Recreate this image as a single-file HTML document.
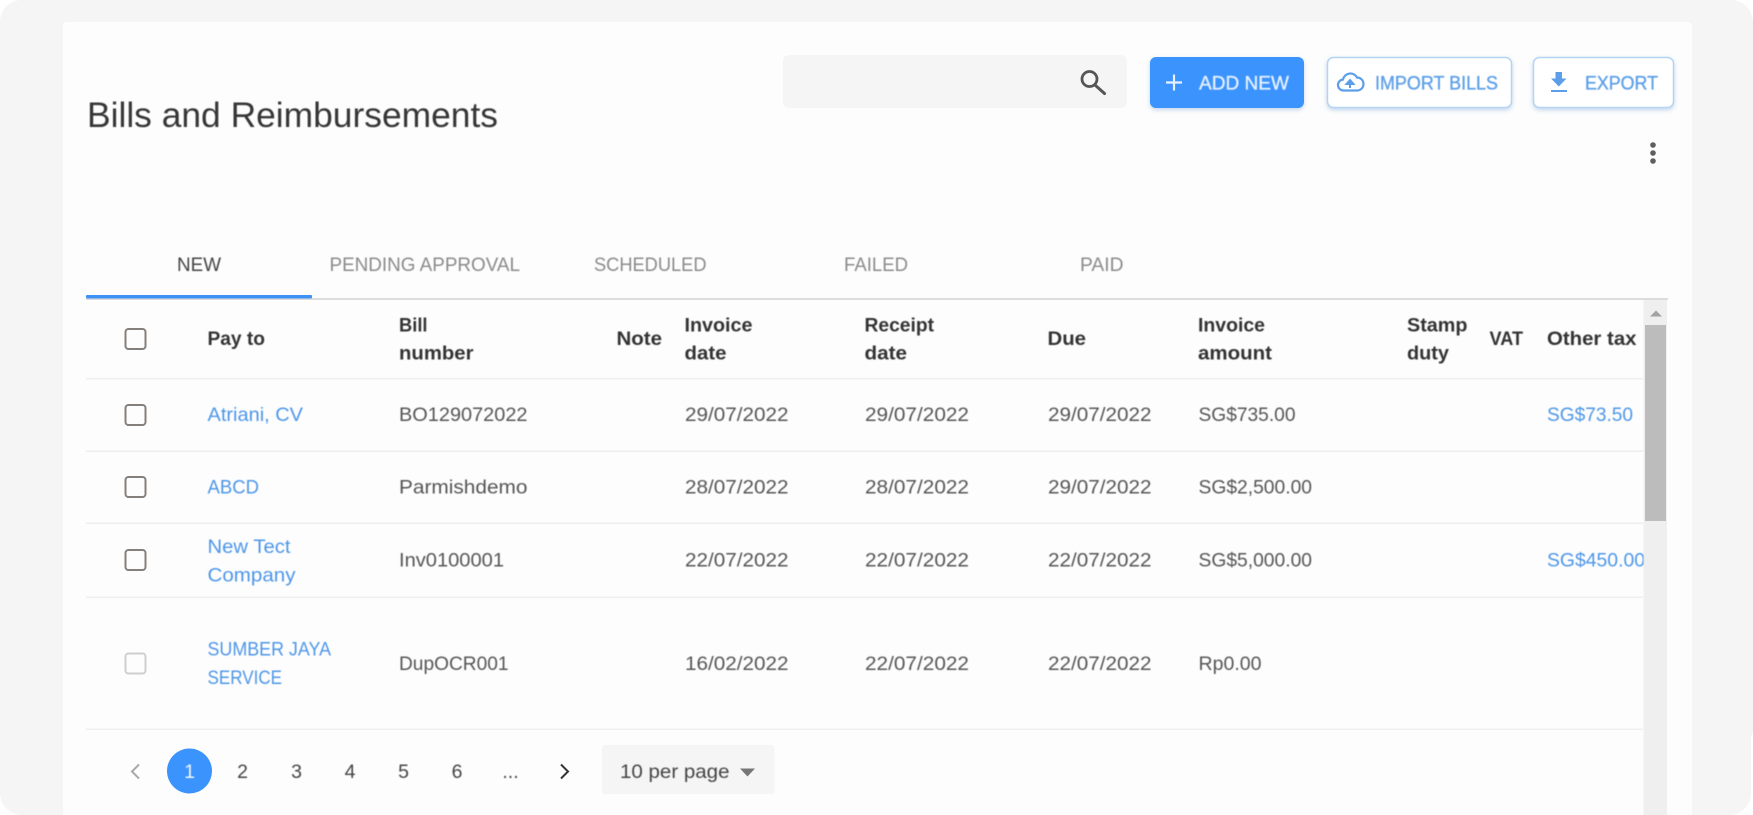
<!DOCTYPE html>
<html lang="en"><head><meta charset="utf-8"><title>Bills and Reimbursements</title>
<style>
html,body{margin:0;padding:0;background:#fff;width:1753px;height:815px;overflow:hidden}
svg{display:block}
text{font-family:"Liberation Sans",sans-serif;font-size:19.5px;fill:#555}
.t{filter:blur(.45px)}
.b{font-weight:700;fill:#333}
.l{fill:#4d96e8}
.tab{fill:#8a8a8a}
.btn{fill:#5c9fe8;stroke:#5c9fe8;stroke-width:.35px}
.pg{fill:#444;text-anchor:middle}
</style></head><body>
<svg width="1753" height="815" viewBox="0 0 1753 815" xmlns="http://www.w3.org/2000/svg">
<defs>
<clipPath id="c"><rect x="1500" y="530" width="143.500" height="60"/></clipPath>
<filter id="s" x="-10%" y="-20%" width="120%" height="150%"><feDropShadow dx="0" dy="2" stdDeviation="2" flood-color="#3d7fc4" flood-opacity=".3"/></filter>
</defs>
<rect width="1753" height="815" fill="#fff"/>
<rect x="0" y="0" width="1751" height="815" rx="22" fill="#f5f5f5"/>
<rect x="0" y="0" width="1753" height="750" rx="22" fill="#f5f5f5"/>
<path d="M63 815V26a4 4 0 0 1 4-4H1688a4 4 0 0 1 4 4V815Z" fill="#fdfdfd"/>

<!-- search -->
<rect x="783" y="55" width="344" height="53" rx="6" fill="#f5f5f5"/>
<circle cx="1089.500" cy="79" r="7.500" fill="none" stroke="#555" stroke-width="2.800"/>
<path d="M1095 85L1104.500 93.500" stroke="#555" stroke-width="3" fill="none" stroke-linecap="round"/>

<!-- buttons -->
<rect x="1150" y="57" width="154" height="51" rx="6" fill="#3b93fd" filter="url(#s)"/>
<path d="M1166 82.500H1182M1174 74.500V90.500" stroke="#e6f1ff" stroke-width="2.200"/>
<rect x="1327.500" y="57.500" width="184" height="50" rx="6" fill="#fff" stroke="#b3d4f3" stroke-width="1.500" filter="url(#s)"/>
<path d="M1344 90.500a5.500 5.500 0 0 1-1-11a7.500 7.500 0 0 1 14-2a6.500 6.500 0 0 1 0 13Z" fill="none" stroke="#5c9fe8" stroke-width="2.200"/>
<path d="M1350 88V83M1346.500 84L1350 80L1353.500 84Z" stroke="#5c9fe8" stroke-width="2" fill="#5c9fe8"/>
<rect x="1533.500" y="57.500" width="140" height="50" rx="6" fill="#fff" stroke="#b3d4f3" stroke-width="1.500" filter="url(#s)"/>
<path d="M1555.500 72H1562V78.500H1566.500L1558.800 86.500L1551 78.500H1555.500Z" fill="#5c9fe8"/>
<rect x="1551" y="90" width="16" height="2" fill="#5c9fe8"/>
<circle cx="1653" cy="145" r="2.800" fill="#5f5f5f"/><circle cx="1653" cy="153" r="2.800" fill="#5f5f5f"/><circle cx="1653" cy="161" r="2.800" fill="#5f5f5f"/>

<!-- tab line -->
<rect x="86" y="298" width="1582" height="2" fill="#dcdcdc"/>
<rect x="86" y="295" width="226" height="3.500" rx="1" fill="#3f92f5"/>

<!-- row lines -->
<g fill="#eeeeee">
<rect x="86" y="378" width="1557" height="1.500"/>
<rect x="86" y="450.500" width="1557" height="1.500"/>
<rect x="86" y="522.500" width="1557" height="1.500"/>
<rect x="86" y="596.500" width="1557" height="1.500"/>
<rect x="86" y="728.500" width="1557" height="1.500"/>
</g>

<!-- scrollbar -->
<rect x="1643.500" y="300" width="23.500" height="515" fill="#efefef"/>
<rect x="1645" y="325" width="21" height="196" fill="#bcbcbc"/>
<path d="M1650 316.500L1656 310.500L1662 316.500Z" fill="#a3a3a3"/>

<!-- checkboxes -->
<g fill="none" stroke="#85807c" stroke-width="2">
<rect x="125.500" y="329" width="20" height="20" rx="3"/>
<rect x="125.500" y="405" width="20" height="20" rx="3"/>
<rect x="125.500" y="477" width="20" height="20" rx="3"/>
<rect x="125.500" y="550" width="20" height="20" rx="3"/>
<rect x="125.500" y="653.500" width="20" height="20" rx="3" stroke="#cfcfcf"/>
</g>

<!-- pagination -->
<circle cx="189.500" cy="771" r="22.500" fill="#3b93fd"/>
<path d="M139 764.500L132 771.500L139 778.500" fill="none" stroke="#aaa" stroke-width="2"/>
<path d="M561 764.500L568 771.500L561 778.500" fill="none" stroke="#333" stroke-width="2"/>
<rect x="602" y="745" width="172.500" height="49" rx="3" fill="#f5f5f5"/>
<path d="M740 768.500H755L747.500 776.500Z" fill="#777"/>

<g class="t">
<text x="87" y="127" style="font-size:35px;fill:#363636" textLength="411" lengthAdjust="spacingAndGlyphs">Bills and Reimbursements</text>

<text x="1199" y="89.500" style="fill:#e6f1ff;stroke:#e6f1ff;stroke-width:.35px" textLength="90" lengthAdjust="spacingAndGlyphs">ADD NEW</text>
<text class="btn" x="1375" y="89.500" textLength="123" lengthAdjust="spacingAndGlyphs">IMPORT BILLS</text>
<text class="btn" x="1585" y="89.500" textLength="73" lengthAdjust="spacingAndGlyphs">EXPORT</text>

<text x="177" y="271" style="fill:#444" textLength="44" lengthAdjust="spacingAndGlyphs">NEW</text>
<text class="tab" x="329.500" y="271" textLength="190.500" lengthAdjust="spacingAndGlyphs">PENDING APPROVAL</text>
<text class="tab" x="594" y="271" textLength="112.500" lengthAdjust="spacingAndGlyphs">SCHEDULED</text>
<text class="tab" x="844" y="271" textLength="64" lengthAdjust="spacingAndGlyphs">FAILED</text>
<text class="tab" x="1080" y="271" textLength="43.500" lengthAdjust="spacingAndGlyphs">PAID</text>

<text class="b" x="207.500" y="345" textLength="57.500" lengthAdjust="spacingAndGlyphs">Pay to</text>
<text class="b" x="399" y="331.500" textLength="28.500" lengthAdjust="spacingAndGlyphs">Bill</text>
<text class="b" x="399" y="359.500" textLength="74.500" lengthAdjust="spacingAndGlyphs">number</text>
<text class="b" x="616.500" y="345" textLength="45.500" lengthAdjust="spacingAndGlyphs">Note</text>
<text class="b" x="684.500" y="331.500" textLength="68" lengthAdjust="spacingAndGlyphs">Invoice</text>
<text class="b" x="684.500" y="359.500" textLength="42" lengthAdjust="spacingAndGlyphs">date</text>
<text class="b" x="864.500" y="331.500" textLength="69.500" lengthAdjust="spacingAndGlyphs">Receipt</text>
<text class="b" x="864.500" y="359.500" textLength="42.500" lengthAdjust="spacingAndGlyphs">date</text>
<text class="b" x="1047.500" y="345" textLength="38.500" lengthAdjust="spacingAndGlyphs">Due</text>
<text class="b" x="1198" y="331.500" textLength="67" lengthAdjust="spacingAndGlyphs">Invoice</text>
<text class="b" x="1198" y="359.500" textLength="74" lengthAdjust="spacingAndGlyphs">amount</text>
<text class="b" x="1407" y="331.500" textLength="60.500" lengthAdjust="spacingAndGlyphs">Stamp</text>
<text class="b" x="1407" y="359.500" textLength="42" lengthAdjust="spacingAndGlyphs">duty</text>
<text class="b" x="1489.500" y="345" textLength="33.500" lengthAdjust="spacingAndGlyphs">VAT</text>
<text class="b" x="1547" y="345" textLength="89.500" lengthAdjust="spacingAndGlyphs">Other tax</text>

<text class="l" x="207.500" y="421" textLength="95.500" lengthAdjust="spacingAndGlyphs">Atriani, CV</text>
<text x="399" y="421" textLength="128.500" lengthAdjust="spacingAndGlyphs">BO129072022</text>
<text x="685" y="421" textLength="103.500" lengthAdjust="spacingAndGlyphs">29/07/2022</text>
<text x="865" y="421" textLength="104" lengthAdjust="spacingAndGlyphs">29/07/2022</text>
<text x="1048" y="421" textLength="103.500" lengthAdjust="spacingAndGlyphs">29/07/2022</text>
<text x="1198.500" y="421" textLength="97" lengthAdjust="spacingAndGlyphs">SG$735.00</text>
<text class="l" x="1547" y="421" textLength="86" lengthAdjust="spacingAndGlyphs">SG$73.50</text>

<text class="l" x="207.500" y="493.500" textLength="51.500" lengthAdjust="spacingAndGlyphs">ABCD</text>
<text x="399" y="493.500" textLength="128.500" lengthAdjust="spacingAndGlyphs">Parmishdemo</text>
<text x="685" y="493.500" textLength="103.500" lengthAdjust="spacingAndGlyphs">28/07/2022</text>
<text x="865" y="493.500" textLength="104" lengthAdjust="spacingAndGlyphs">28/07/2022</text>
<text x="1048" y="493.500" textLength="103.500" lengthAdjust="spacingAndGlyphs">29/07/2022</text>
<text x="1198.500" y="493.500" textLength="113.500" lengthAdjust="spacingAndGlyphs">SG$2,500.00</text>

<text class="l" x="207.500" y="553" textLength="83" lengthAdjust="spacingAndGlyphs">New Tect</text>
<text class="l" x="207.500" y="581.500" textLength="88" lengthAdjust="spacingAndGlyphs">Company</text>
<text x="399" y="566.500" textLength="105" lengthAdjust="spacingAndGlyphs">Inv0100001</text>
<text x="685" y="566.500" textLength="103.500" lengthAdjust="spacingAndGlyphs">22/07/2022</text>
<text x="865" y="566.500" textLength="104" lengthAdjust="spacingAndGlyphs">22/07/2022</text>
<text x="1048" y="566.500" textLength="103.500" lengthAdjust="spacingAndGlyphs">22/07/2022</text>
<text x="1198.500" y="566.500" textLength="113.500" lengthAdjust="spacingAndGlyphs">SG$5,000.00</text>
<g clip-path="url(#c)"><text class="l" x="1547" y="566.500" textLength="98" lengthAdjust="spacingAndGlyphs">SG$450.00</text></g>

<text class="l" x="207.500" y="655.500" textLength="123.500" lengthAdjust="spacingAndGlyphs">SUMBER JAYA</text>
<text class="l" x="207.500" y="684" textLength="74.500" lengthAdjust="spacingAndGlyphs">SERVICE</text>
<text x="399" y="670" textLength="109.500" lengthAdjust="spacingAndGlyphs">DupOCR001</text>
<text x="685" y="670" textLength="103.500" lengthAdjust="spacingAndGlyphs">16/02/2022</text>
<text x="865" y="670" textLength="104" lengthAdjust="spacingAndGlyphs">22/07/2022</text>
<text x="1048" y="670" textLength="103.500" lengthAdjust="spacingAndGlyphs">22/07/2022</text>
<text x="1198.500" y="670" textLength="63" lengthAdjust="spacingAndGlyphs">Rp0.00</text>

<text class="pg" x="189.500" y="778" style="fill:#f2f7ff">1</text>
<text class="pg" x="242.500" y="778">2</text>
<text class="pg" x="296.500" y="778">3</text>
<text class="pg" x="350" y="778">4</text>
<text class="pg" x="403.500" y="778">5</text>
<text class="pg" x="457" y="778">6</text>
<text class="pg" x="510.500" y="778">...</text>
<text x="620" y="778" style="fill:#444" textLength="109.500" lengthAdjust="spacingAndGlyphs">10 per page</text>
</g>
</svg>
</body></html>
